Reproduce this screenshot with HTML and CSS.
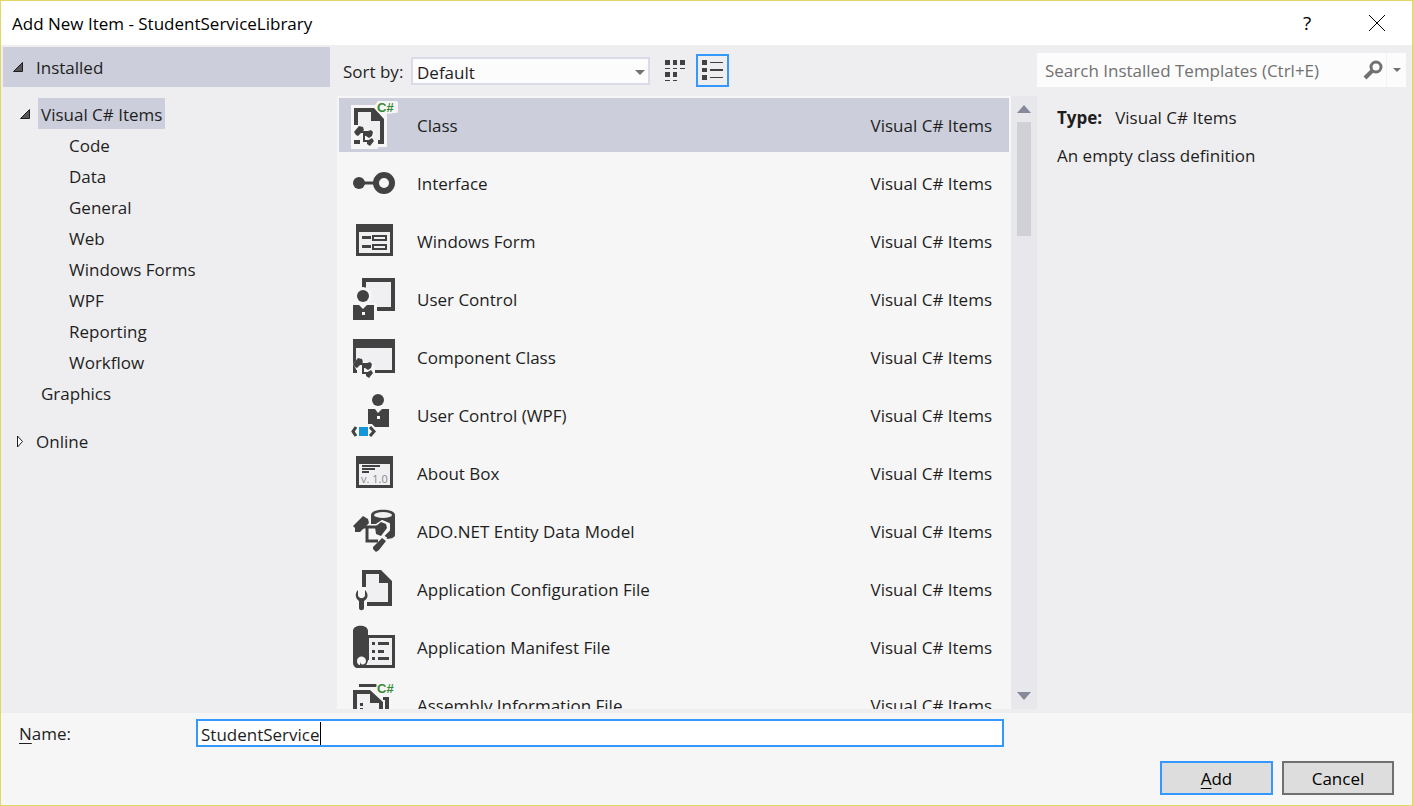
FILE: index.html
```html
<!DOCTYPE html>
<html lang="en">
<head>
  <meta charset="UTF-8">
  <meta name="viewport" content="width=device-width, initial-scale=1.0">
  <title>Add New Item - StudentServiceLibrary</title>
  <link rel="stylesheet" href="styles.css">
</head>
<body>
  <!-- shared icon parts -->
  <svg class="defs" width="0" height="0" aria-hidden="true">
    <symbol id="parts" viewBox="0 0 24 24">
      <path d="M2 9l6-7 5 4 8 1 3 4-2 4 2 3-5 6-6-3H10v-8L5 14z" fill="#f6f6f6"/>
      <path d="M2 9L7 3l4 1 1 3-6 6-2-1zM13 8h3l3-1 2 2-1 4-3 2-3-2h-2zM15 18l5-3 2 3-4 5-3-2z"/>
      <path d="M9 9h6M12 9v9h5" fill="none" stroke="#424242" stroke-width="2"/>
    </symbol>
  </svg>

  <div class="dialog">
    <header class="titlebar">
      <h1>Add New Item - StudentServiceLibrary</h1>
      <button class="title-btn" type="button" aria-label="Help">?</button>
      <button class="title-btn" type="button" aria-label="Close">
        <svg width="16" height="16" viewBox="0 0 16 16"><path d="M0 0l16 16M16 0L0 16" stroke="#000" stroke-width="1"/></svg>
      </button>
    </header>

    <main class="content">
      <nav class="sidebar">
        <div class="section open">
          <svg width="10" height="10" viewBox="0 0 10 10"><path d="M9.500 .5v9H.5z" fill="#555" stroke="#1e1e1e"/></svg>
          <span>Installed</span>
        </div>
        <ul class="tree">
          <li>
            <div class="node">
              <svg width="10" height="10" viewBox="0 0 10 10"><path d="M9.500 .5v9H.5z" fill="#555" stroke="#1e1e1e"/></svg>
              <span class="selected">Visual C# Items</span>
            </div>
            <ul class="children">
              <li>Code</li>
              <li>Data</li>
              <li>General</li>
              <li>Web</li>
              <li>Windows Forms</li>
              <li>WPF</li>
              <li>Reporting</li>
              <li>Workflow</li>
            </ul>
          </li>
          <li class="leaf">Graphics</li>
        </ul>
        <div class="section online">
          <svg width="10" height="14" viewBox="0 0 10 14"><path d="M4.500 1v11l5-5.500z" fill="#fff" stroke="#1e1e1e"/></svg>
          <span>Online</span>
        </div>
      </nav>

      <section class="templates">
        <div class="toolbar">
          <label for="sort">Sort by:</label>
          <div class="select-wrap">
            <select id="sort"><option>Default</option></select>
            <svg class="select-arrow" width="10" height="5" viewBox="0 0 10 5"><path d="M0 0h10L5 5z" fill="#717171"/></svg>
          </div>
          <button class="view-btn" type="button" aria-label="Small icons">
            <svg width="33" height="33" viewBox="0 0 33 33" fill="#424242">
              <path d="M4 6h5v5H4zM12 6h4v5h-4zM19 6h5v5h-5zM4 14h5v1H4zM12 14h4v1h-4zM19 14h5v1h-5zM4 18h5v5H4zM12 18h4v5h-4zM4 26h5v1H4zM12 26h4v1h-4z"/>
            </svg>
          </button>
          <button class="view-btn active" type="button" aria-label="Medium icons">
            <svg width="29" height="29" viewBox="0 0 29 29" fill="#424242">
              <path d="M4 4h5v5H4zM4 12h5v4H4zM4 19h5v5H4zM12 6h13v1H12zM12 13h13v2H12zM12 21h13v1H12z"/>
            </svg>
          </button>
        </div>

        <div class="list-area">
          <ul class="list">
            <li class="item current">
              <svg class="icon" viewBox="0 0 48 48">
                <path class="bg" d="M1 4h24l3-4h18q2 0 2 2v8q0 2-2 2h-9v34h-8l-2 2H1z"/>
                <path d="M4 7h20l10 11v25h-6v-4h2V20h-9v-9H8v13H4zM4 39h6v4H4z"/>
                <path class="inside" d="M8 11h13v9h9v19H8z"/>
                <use href="#parts" x="2" y="22" width="24" height="24"/>
                <text class="cs" x="27" y="11">C#</text>
              </svg>
              <span>Class</span><span class="kind">Visual C# Items</span>
            </li>
            <li class="item">
              <svg class="icon" viewBox="0 0 48 48">
                <circle cx="9" cy="24" r="6"/>
                <path d="M14 22.500h12v3H14z"/>
                <circle class="ring" cx="34" cy="24" r="8"/>
              </svg>
              <span>Interface</span><span class="kind">Visual C# Items</span>
            </li>
            <li class="item">
              <svg class="icon" viewBox="0 0 48 48">
                <path d="M6 7h37v32H6z"/>
                <path class="inside" d="M9 15h31v21H9z"/>
                <path d="M12 19h9v3h-9zM22 18h15v6H22zM12 28h9v3h-9zM22 27h15v6H22z"/>
                <path class="inside" d="M24 20h11v2H24zM24 29h11v2H24z"/>
              </svg>
              <span>Windows Form</span><span class="kind">Visual C# Items</span>
            </li>
            <li class="item">
              <svg class="icon" viewBox="0 0 48 48">
                <path d="M12 3h33v33H12z"/>
                <path class="inside" d="M16 7h25v25H16z"/>
                <circle class="bg" cx="13" cy="21" r="9"/>
                <path class="bg" d="M0 28h27v20H0z"/>
                <circle cx="13" cy="21" r="6"/>
                <path d="M3 30h6l4 4 4-4h7v15H3z"/>
                <path class="bg" d="M12 37h3v3h-3z"/>
              </svg>
              <span>User Control</span><span class="kind">Visual C# Items</span>
            </li>
            <li class="item">
              <svg class="icon" viewBox="0 0 48 48">
                <path d="M3 6h42v34H3z"/>
                <path class="inside" d="M6 15h36v22H6z"/>
                <path class="bg" d="M7 33h18v8H7z"/>
                <use href="#parts" x="1" y="22" width="24" height="24"/>
              </svg>
              <span>Component Class</span><span class="kind">Visual C# Items</span>
            </li>
            <li class="item">
              <svg class="icon" viewBox="0 0 48 48">
                <circle cx="28" cy="9" r="6"/>
                <path d="M18 18h7l3 4 4-4h7v18H25l-3-3h-4z"/>
                <path class="bg" d="M27 25h3v3h-3z"/>
                <path d="M9 36h9v9H9z" fill="#1496d6"/>
                <path d="M6 36l-3 4.500L6 45M20 36l4 4.500-4 4.500" fill="none" stroke="#424242" stroke-width="3"/>
              </svg>
              <span>User Control (WPF)</span><span class="kind">Visual C# Items</span>
            </li>
            <li class="item">
              <svg class="icon" viewBox="0 0 48 48">
                <path d="M6 7h37v32H6z"/>
                <path class="inside" d="M9 15h31v21H9z"/>
                <path d="M12 16h18v2H12zM12 19h13v2H12zM12 22h7v2h-7z"/>
                <text class="version" x="11" y="34">v. 1.0</text>
              </svg>
              <span>About Box</span><span class="kind">Visual C# Items</span>
            </li>
            <li class="item">
              <svg class="icon" viewBox="0 0 48 48">
                <path d="M21 8c0-7 24-7 24 0v20c0 3-5 4-10 4L21 18z"/>
                <ellipse class="inside" cx="33" cy="8" rx="9" ry="3"/>
                <path class="halo" d="M20 18h6l6-4 7 3v6l-6 6 3 2-6 10-8-3z"/>
                <path d="M3 19L13 9l5 3 1 4-9 9H5v-4zM25 20l6-5 5 2 1 4-6 8-5-2zM23 40l9-9 4 3-7 9-3 2-3-3z"/>
                <path d="M13 20h15M17 20v14h11" fill="none" stroke="#424242" stroke-width="3"/>
              </svg>
              <span>ADO.NET Entity Data Model</span><span class="kind">Visual C# Items</span>
            </li>
            <li class="item">
              <svg class="icon" viewBox="0 0 48 48">
                <path d="M12 5h19l11 11v25H17v-4h21V18h-9V9H16v13h-4z"/>
                <path class="inside" d="M16 9h13v9h9v19H17V23h-1z"/>
                <path d="M8 25c-4 4-2 9 1 11v7c0 3 5 3 5 0v-7c4-2 5-7 1-11v6l-2 2h-3l-2-2z"/>
              </svg>
              <span>Application Configuration File</span><span class="kind">Visual C# Items</span>
            </li>
            <li class="item">
              <svg class="icon" viewBox="0 0 48 48">
                <path d="M3 8c0-7 15-7 15 0v4h27v33H8c-3 0-5-2-5-6z"/>
                <path class="inside" d="M19 15h23v27H16c2-3 2-5 2-5h1z"/>
                <path class="bg" d="M7 38c0-6 9-6 9 0 0 4-5 5-6 1v3c-2 0-3-2-3-4z"/>
                <path d="M22 19h3v3h-3zM28 19h11v3H28zM22 27h3v3h-3zM28 27h6v3h-6zM22 34h3v3h-3zM28 34h11v3H28z"/>
              </svg>
              <span>Application Manifest File</span><span class="kind">Visual C# Items</span>
            </li>
            <li class="item">
              <svg class="icon" viewBox="0 0 48 48">
                <path d="M9 3h17l2 3H9zM3 9h17l13 12v27H3zM33 16h6v32h-4V19h-2z"/>
                <path class="inside" d="M7 13h13v9h9v26H7z"/>
                <path d="M10 22h3v3h-3zM10 27h3v3h-3z"/>
                <text class="cs" x="27" y="12">C#</text>
              </svg>
              <span>Assembly Information File</span><span class="kind">Visual C# Items</span>
            </li>
          </ul>
          <div class="scrollbar">
            <svg width="14" height="8" viewBox="0 0 14 8"><path d="M0 8h14L7 0z" fill="#868999"/></svg>
            <div class="thumb"></div>
            <svg width="14" height="8" viewBox="0 0 14 8"><path d="M0 0h14L7 8z" fill="#868999"/></svg>
          </div>
        </div>
      </section>

      <aside class="details">
        <div class="search">
          <input type="text" placeholder="Search Installed Templates (Ctrl+E)" aria-label="Search Installed Templates">
          <button type="button" aria-label="Search">
            <svg width="20" height="20" viewBox="0 0 20 20" fill="none" stroke="#717171"><circle cx="13" cy="7" r="5" stroke-width="3"/><path d="M9 11l-7 7" stroke-width="4"/></svg>
          </button>
          <button class="search-more" type="button" aria-label="Search options">
            <svg width="8" height="4" viewBox="0 0 8 4"><path d="M0 0h8L4 4z" fill="#717171"/></svg>
          </button>
        </div>
        <p class="type"><b>Type:</b><span>Visual C# Items</span></p>
        <p>An empty class definition</p>
      </aside>
    </main>

    <footer class="footer">
      <div class="name-row">
        <label for="name"><u>N</u>ame:</label>
        <div class="name-field">
          <input id="name" type="text" value="StudentService">
          <span class="caret"></span>
        </div>
      </div>
      <div class="actions">
        <button class="btn primary" type="button"><span><u>A</u>dd</span></button>
        <button class="btn" type="button">Cancel</button>
      </div>
    </footer>
  </div>
</body>
</html>
```
FILE: styles.css
```css
* {
  box-sizing: border-box;
}
body {
  margin: 0;
  font-family: 'Open Sans', 'Noto Sans', sans-serif;
  font-size: 17px;
  line-height: 24px;
  color: #1e1e1e;
}
ul, p, h1 {
  margin: 0;
  padding: 0;
  list-style: none;
}
button, input, select {
  font: inherit;
  color: inherit;
  border: 0;
  padding: 0;
  background: none;
  border-radius: 0;
  outline: none;
}
svg {
  display: block;
  flex: none;
}
u {
  text-underline-offset: 3px;
}
.defs {
  position: absolute;
}
.dialog {
  display: flex;
  flex-direction: column;
  height: 100vh;
  border: 1px solid #e0d765;
  background: #f6f6f6;
}

/* title bar */
.titlebar {
  display: flex;
  height: 44px;
  flex: none;
  align-items: center;
  background: #ffffff;
  color: #000000;
}
.titlebar h1 {
  flex: 1;
  padding: 2px 0 0 11px;
  font-size: 17px;
  font-weight: normal;
}
.title-btn {
  display: flex;
  width: 70px;
  height: 44px;
  align-items: center;
  justify-content: center;
  font-size: 19px;
}

.content {
  display: grid;
  grid-template-columns: 336px 1fr 375px;
  flex: 1;
  min-height: 0;
  background: #eeeef0;
}

/* category tree */
.sidebar {
  padding: 2px 7px 0 2px;
}
.section {
  display: flex;
  align-items: center;
  gap: 13px;
  padding-left: 10px;
}
.section.open {
  height: 40px;
  background: #cccedb;
}
.section.open span {
  padding-top: 2px;
}
.section.online {
  height: 31px;
  margin-top: 18px;
}
.tree {
  padding: 11px 0 0 17px;
  line-height: 33px;
}
.node {
  display: flex;
  align-items: center;
  gap: 8px;
  height: 31px;
}
.selected {
  height: 31px;
  padding: 0 3px;
  background: #cccedb;
}
.children {
  padding-left: 49px;
}
.children li,
.leaf {
  height: 31px;
}
.leaf {
  padding-left: 21px;
}

/* template list */
.templates {
  display: flex;
  flex-direction: column;
  min-height: 0;
  padding-bottom: 4px;
}
.toolbar {
  display: flex;
  align-items: center;
  height: 51px;
  flex: none;
  padding-left: 6px;
}
.toolbar label {
  width: 68px;
  padding-top: 2px;
  white-space: nowrap;
}
.select-wrap {
  position: relative;
  width: 239px;
  margin-right: 11px;
}
.select-wrap select {
  display: block;
  width: 100%;
  height: 28px;
  padding: 2px 0 0 4px;
  appearance: none;
  border: 2px solid #d9dce6;
  background: #fcfcfc;
}
.select-arrow {
  position: absolute;
  right: 5px;
  top: 13px;
}
.view-btn {
  width: 33px;
  height: 33px;
}
.view-btn.active {
  margin-left: 2px;
  border: 2px solid #3399ff;
}
.list-area {
  display: flex;
  flex: 1;
  min-height: 0;
}
.list {
  flex: 1;
  padding: 2px;
  overflow: hidden;
  background: #f6f6f6;
}
.item {
  display: flex;
  align-items: center;
  height: 54px;
  margin-bottom: 4px;
  padding: 0 17px 0 11px;
}
.item span {
  padding-top: 2px;
}
.item.current {
  background: #cccedb;
}
.icon {
  width: 48px;
  height: 48px;
  margin-right: 19px;
  fill: #424242;
}
.icon .inside {
  fill: #f0eff1;
}
.icon .bg {
  fill: #f6f6f6;
}
.icon .ring {
  fill: #f6f6f6;
  stroke: #424242;
  stroke-width: 6px;
}
.halo {
  fill: #f6f6f6;
  stroke: #f6f6f6;
  stroke-width: 2px;
  stroke-linejoin: round;
}
.cs {
  font: bold 13px 'Liberation Sans', sans-serif;
  fill: #388a34;
  stroke: #f6f6f6;
  stroke-width: 3px;
  paint-order: stroke;
}
.version {
  font: 11px 'Open Sans', sans-serif;
  fill: #888888;
}
.kind {
  margin-left: auto;
}
.scrollbar {
  display: flex;
  flex-direction: column;
  align-items: center;
  width: 26px;
  padding: 9px 0;
  background: #e8e8ec;
}
.thumb {
  width: 14px;
  height: 114px;
  margin: 9px 0 auto;
  background: #d0d1d7;
}

/* search and description */
.details {
  padding: 8px 6px 0 0;
}
.search {
  display: flex;
  height: 34px;
  margin-bottom: 19px;
  background: #fcfcfc;
}
.search input {
  flex: 1;
  min-width: 0;
  padding: 2px 0 0 8px;
}
.search input::placeholder {
  color: #717171;
  opacity: 1;
}
.search button {
  display: flex;
  width: 26px;
  align-items: center;
  justify-content: center;
}
.search .search-more {
  width: 20px;
  border-left: 1px solid #f3f3f5;
}
.details p {
  padding-left: 20px;
  margin-bottom: 14px;
}
.type {
  display: flex;
  gap: 13px;
}

/* name and buttons */
.footer {
  flex: none;
  height: 92px;
  padding: 6px 18px 0;
}
.name-row {
  display: flex;
  align-items: center;
  margin-bottom: 14px;
}
.name-row label {
  width: 177px;
  padding-top: 2px;
}
.name-field {
  position: relative;
  flex: 1;
  margin-right: 390px;
}
.name-field input {
  display: block;
  width: 100%;
  height: 28px;
  padding: 2px 0 0 3px;
  border: 2px solid #3399ff;
  background: #ffffff;
}
.caret {
  position: absolute;
  left: 124px;
  top: 3px;
  width: 1px;
  height: 23px;
  background: #000000;
}
.actions {
  display: flex;
  justify-content: flex-end;
  gap: 9px;
}
.btn {
  width: 112px;
  height: 34px;
  padding-top: 2px;
  border: 2px solid #707070;
  background: #dddddd;
  color: #000000;
}
.btn.primary {
  width: 113px;
  border-color: #3399ff;
}
```
